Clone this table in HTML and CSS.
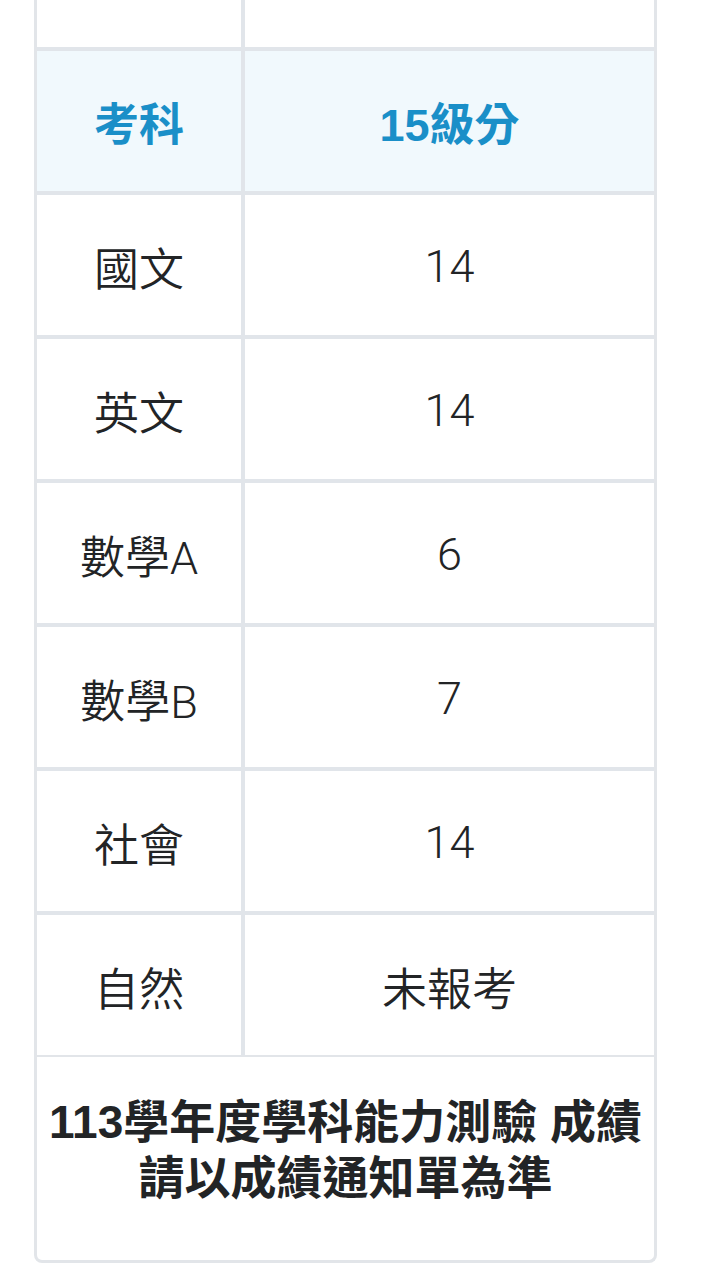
FILE: index.html
```html
<!DOCTYPE html>
<html lang="zh-Hant">
<head>
<meta charset="utf-8">
<link rel="stylesheet" href="styles.css">
</head>
<body>
<div class="card">
  <div class="grid">
    <div class="cell top"></div><div class="cell top"></div>
    <div class="cell head">考科</div><div class="cell head">15級分</div>
    <div class="cell">國文</div><div class="cell">14</div>
    <div class="cell">英文</div><div class="cell">14</div>
    <div class="cell">數學A</div><div class="cell">6</div>
    <div class="cell">數學B</div><div class="cell">7</div>
    <div class="cell">社會</div><div class="cell">14</div>
    <div class="cell">自然</div><div class="cell">未報考</div>
  </div>
  <div class="note">113學年度學科能力測驗 成績<br>請以成績通知單為準</div>
</div>
</body>
</html>
```
FILE: styles.css
```css
html, body {
  margin: 0;
  padding: 0;
  background: #ffffff;
}
body {
  font-family: "Liberation Sans", "Noto Sans CJK TC", sans-serif;
  color: #222426;
}
.card {
  width: 617px;
  margin-left: 34px;
  border: 3px solid #e2e5e9;
  border-top: none;
  border-radius: 0 0 8px 8px;
}
.grid {
  display: grid;
  grid-template-columns: 204px 409px;
  grid-template-rows: 47px repeat(7, 140px);
  gap: 4px;
  background: #e1e5ea;
}
.cell {
  background: #ffffff;
  display: flex;
  align-items: center;
  justify-content: center;
  font-family: "Roboto", "Noto Sans CJK TC", sans-serif;
  font-weight: 350;
  font-size: 45px;
  padding-top: 2px;
}
.cell.head {
  background: #f1f9fd;
  color: #1a8fc8;
  font-family: "Liberation Sans", "Noto Sans CJK TC", sans-serif;
  font-weight: bold;
  padding-top: 0;
}
.note {
  border-top: 2px solid #e2e5e9;
  height: 166px;
  padding-top: 37px;
  text-align: center;
  font-size: 46px;
  font-weight: bold;
  line-height: 56px;
  color: #222426;
}
```
